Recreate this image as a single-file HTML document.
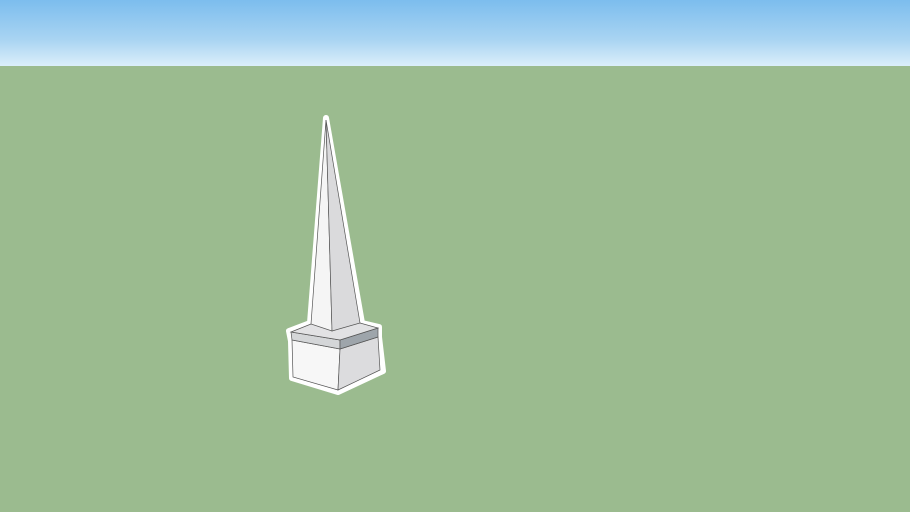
<!DOCTYPE html>
<html><head><style>
html,body{margin:0;padding:0;width:910px;height:512px;overflow:hidden;background:#9bbb8f}
</style></head><body>
<svg width="910" height="512" viewBox="0 0 910 512" xmlns="http://www.w3.org/2000/svg">
<defs><linearGradient id="sky" x1="0" y1="0" x2="0" y2="1">
<stop offset="0" stop-color="#7cbdee"/><stop offset="0.6" stop-color="#a9d4f2"/><stop offset="1" stop-color="#dbeefa"/></linearGradient></defs>
<rect x="0" y="0" width="910" height="66" fill="url(#sky)"/>
<rect x="0" y="66" width="910" height="446" fill="#9bbb8f"/>
<!-- halo -->
<path d="M326,118 L362,323 L379,327 L379,337 L383,371 L338,392 L292,378 L291,341 L289,331 L310,323 Z" fill="#fff" stroke="#fff" stroke-width="6" stroke-linejoin="round"/>
<!-- base -->
<path d="M292,340 L340,349 L338,390 L293,377 Z" fill="#f7f7f7" stroke="#555" stroke-width="0.7"/>
<path d="M340,349 L378,337 L380,370 L338,390 Z" fill="#dcdcde" stroke="#555" stroke-width="0.7"/>
<!-- slab -->
<path d="M291,332 L340,340 L340,349 L292,340 Z" fill="#d4d6d8" stroke="#555" stroke-width="0.7"/>
<path d="M340,340 L378,328 L378,337 L340,349 Z" fill="#9ea5ab" stroke="#555" stroke-width="0.7"/>
<path d="M291,332 L311,324 L360,323 L378,328 L340,340 Z" fill="#e2e2e4" stroke="#555" stroke-width="0.7"/>
<!-- spire -->
<path d="M326,120 L332,331 L311,324 Z" fill="#f5f5f5" stroke="#555" stroke-width="0.7"/>
<path d="M326,120 L360,323 L332,331 Z" fill="#dadadc" stroke="#555" stroke-width="0.7"/>
</svg>
</body></html>
